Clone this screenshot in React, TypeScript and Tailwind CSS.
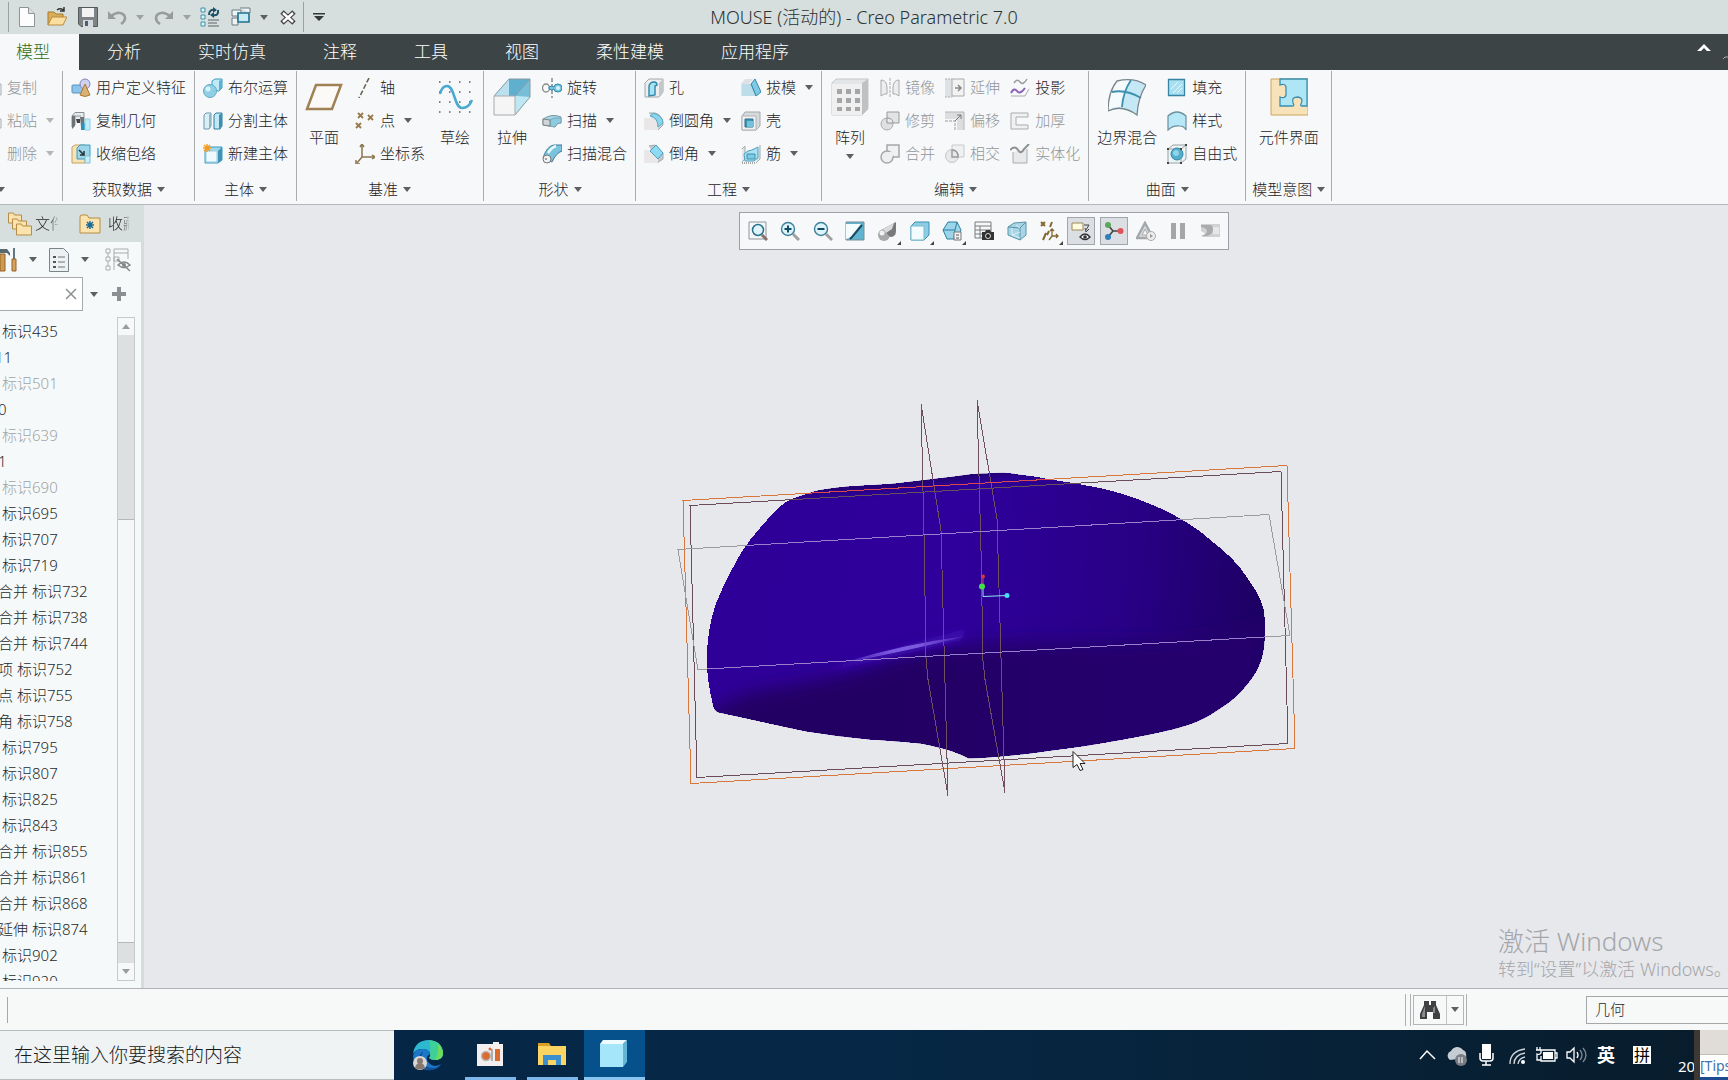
import { ReactNode } from "react";

const B = "#3d9cc4";
const L = "#bfe9f7";
const G = "#a9abad";
const T = "#96794a";

const iconArt: Record<string, ReactNode> = {
  udf: (
    <>
      <rect x="1" y="7" width="11" height="8" rx="1" fill="#8cc4ea" stroke="#5591c4" />
      <circle cx="14" cy="6" r="5" fill="#cfd2ee" stroke="#8487bb" />
      <path d="M14 6 19 17q-5 3-10 0Z" fill="#dcb274" stroke="#aa7a3c" />
    </>
  ),
  copyGeom: (
    <>
      <path d="M1 5 4 1.500H13V12M1 5V16L4 13M4 5v9M1 5H10" fill="#e8ebed" stroke="#8a9297" />
      <path d="M1 5h3v10l-3 3ZM9 6h4v10h-3Z" fill="#6d7478" />
      <path d="M5 8h4v4H6Z" fill="#444" />
      <path d="M10 12h4v7h-4Z" fill="#2e90b8" />
      <path d="M14 8h5v11h-5Z" fill="#bfeefa" stroke="#8fd0e4" />
    </>
  ),
  shrink: (
    <>
      <path d="M1 3 4 1h10v18H1Z" fill="#f7e3b6" stroke="#c3a264" />
      <path d="M6 4 9 1h10v11l-3 3H6Z" fill="#9dd6ea" stroke={B} />
      <path d="m8 6 5 5m0-4v4H9" stroke="#25333a" strokeWidth="1.500" />
      <path d="M14 12h5v7h-5Z" fill="#c9f1fb" stroke="#80bdd2" />
    </>
  ),
  boolean: (
    <>
      <path d="m9 3 3-2h7v9l-3 3H9Z" fill={L} stroke={B} />
      <path d="m16 13 3-3V1l-3 2Z" fill="#5fb0cc" />
      <circle cx="7" cy="13" r="6.500" fill="#8fd0e6" stroke="#62a9c2" />
      <circle cx="5" cy="11" r="2.500" fill="#d8f3fb" />
    </>
  ),
  split: (
    <>
      <path d="m1 4 2-2h5v13l-2 3H1Z" fill="#d9eef5" stroke="#6d99ab" />
      <path d="m6 18 2-3V2L6 4Z" fill="#8fb6c5" />
      <path d="m11 4 2-2h6v13l-2 3h-6Z" fill={L} stroke="#2d7d9e" />
      <path d="m16 18 3-3V2l-3 2Z" fill="#3d8fb0" />
    </>
  ),
  newBody: (
    <>
      <path d="m2 6 3-3h14v13l-4 3H2Z" fill="#9ed8ec" stroke={B} />
      <path d="M3 7h11v11H3Z" fill="#eefafd" stroke="#9fcbdb" />
      <path d="M15 7 19 3v13l-4 3Z" fill="#3f93b4" />
      <path d="M4 0v8M0 4h8M1 1l6 6M7 1 1 7" stroke="#f39a1f" strokeWidth="1.400" />
    </>
  ),
  axis: <path d="M14 0 4 20" stroke="#6b604f" strokeWidth="1.600" strokeDasharray="5 2" />,
  point: (
    <path d="m3 2 5 5m0-5L3 7m10-3 5 5m0-5-5 5M1 12l5 5m0-5-5 5" stroke={T} strokeWidth="1.800" />
  ),
  csys: (
    <>
      <path d="M7 1v12h12M7 13l-5 6" stroke="#8a744f" strokeWidth="1.500" />
      <path d="m5 3 2-3 2 3m8 8 3 2-3 2M1 16v4h4" stroke="#8a744f" strokeWidth="1.500" />
    </>
  ),
  revolve: (
    <>
      <path d="M10 0v20" stroke="#555" strokeDasharray="4 2" />
      <ellipse cx="4" cy="10" rx="3.500" ry="4" fill="#fafafa" stroke="#888" strokeWidth="1.300" />
      <path d="M7 9q3-2 5 0 0-3 4-3a4 4 0 0 1 0 8q-4 0-4-3-2 2-5 0Z" fill="#78c6e2" stroke="#2f88ab" />
      <circle cx="16" cy="10" r="2" fill="#d7f4fc" />
    </>
  ),
  sweep: (
    <>
      <path d="M1 8q9-6 18-2v6q-4-1-6 4l-12-2Z" fill="#9fd4e6" stroke="#7d979f" />
      <path d="M8 9q4-3 11-2v5q-4-1-6 4l-5-1Z" fill="#8ccbe0" stroke="#7fa7b5" />
      <path d="M1 8l7 1v6l-7-1Z" fill="#d2d6d8" stroke="#7a8488" />
    </>
  ),
  sweepBlend: (
    <>
      <path d="M1 14C4 5 8 1 13 1h7v6q-6 2-10 11Z" fill="#7cc4de" stroke="#3a7b96" />
      <path d="M6 9q4-6 8-7" stroke="#e9fafe" strokeWidth="2.500" />
      <circle cx="5" cy="15" r="4" fill="#f1f2f3" stroke="#777" />
      <circle cx="4" cy="15" r="1" fill="#888" />
    </>
  ),
  hole: (
    <>
      <path d="m1 5 4-4h14v13l-4 5H1Z" fill="#eceeef" stroke="#a4a8aa" />
      <path d="m15 19 4-5V1l-4 4Z" fill="#c3c7c9" />
      <path d="M5 18V8q1-4 5-4 3 0 3 3l-2 1v9Z" fill="#a7e3f5" stroke="#2f86a8" strokeWidth="1.400" />
    </>
  ),
  round: (
    <>
      <path d="M5 2h6q8 2 8 12l-5 5" stroke="#a2a9ac" fill="#d1d6d8" />
      <path d="M0 7h6q8 0 8 12H0Z" fill="#e9e7e8" />
      <path d="M6 5q3-4 6-2 7 3 7 9l-5 4Q14 6 6 5Z" fill="#8bd5ed" stroke="#5aa9c6" />
    </>
  ),
  chamfer: (
    <>
      <path d="m5 2 6-1 8 8v6l-6 4" fill="#c5cbce" stroke="#a2a9ac" />
      <path d="M0 6h5l9 8v5H0Z" fill="#e9e7e8" />
      <path d="m6 7 6-6 7 8-5 6Z" fill="#8ddaf2" stroke="#4f9fbd" />
    </>
  ),
  draft: (
    <>
      <path d="M0 6 4 1h8l-4 5v12H0Z" fill="#dfe2e4" />
      <path d="m10 6 4-5 6 13-5 4Z" fill="#7ec9e3" stroke="#318aae" />
      <path d="M1 6h9l5 12H1Z" fill="#bcdde9" />
      <path d="m10 6 5 12" stroke="#318aae" />
    </>
  ),
  shell: (
    <>
      <path d="m1 5 3-4h15v14l-4 4H1Z" fill="#d6d9db" stroke="#a4a9ab" />
      <path d="M1 5h14v14H1Z" fill="#f0f1f1" stroke="#b0b4b6" />
      <path d="M4 8h8v8H4Z" fill="#3f96b7" stroke="#2c6f8a" />
      <path d="M6 10h6v6H6Z" fill="#77c2db" />
    </>
  ),
  rib: (
    <>
      <path d="m1 5 3-3v13l-3 3M19 1v14l-4 4" fill="#e3e6e7" stroke="#a4a9ab" />
      <path d="M3 10q4-4 8-4l6-3v11l-4 3H4Z" fill="#a9e2f3" stroke="#4f9fbd" />
      <path d="M6 10h8v5H6Z" fill="#7fcbe3" stroke="#3f8fae" />
      <path d="M1 19h13" stroke="#555" strokeDasharray="1 1" />
    </>
  ),
  mirror: (
    <>
      <path d="M1 18V2q6 0 6 8v6q-2-1-6 2Z" fill="#ededee" stroke={G} />
      <path d="M10 0v20" stroke={G} strokeDasharray="3 1" />
      <path d="M19 18V2q-6 0-6 8v6q2-1 6 2Z" fill="#ededee" stroke={G} />
    </>
  ),
  extend: (
    <>
      <path d="M0 1h9v18H0" fill="#e0e1e2" />
      <path d="M0 1h7M0 19h7" stroke={G} strokeDasharray="2 1" />
      <path d="M7 1h12v17H7Z" fill="#f2f2f3" stroke="#aaa" />
      <path d="M10 10h6m-3-3 3 3-3 3" stroke="#888" strokeWidth="1.500" />
    </>
  ),
  project: (
    <>
      <path d="M4 5q3-5 6-1t7-3" stroke="#9a9da0" strokeWidth="1.500" />
      <path d="M1 15q3-6 6-2t8-3" stroke="#8a63b5" strokeWidth="2" />
      <path d="M1 18h14l4-7" stroke="#aaa" />
    </>
  ),
  trim: (
    <>
      <path d="M7 1h12v11H7Z" fill="#e2e3e4" stroke="#999" />
      <circle cx="7" cy="13" r="6" fill="#d4d6d7" fillOpacity=".7" stroke={G} />
      <path d="M7 12V7q6 0 6 5Z" fill="#e9eaeb" stroke="#999" />
    </>
  ),
  offset: (
    <>
      <path d="M0 1h19v18h-7V8H0Z" fill="#dcdddf" />
      <path d="M0 1h19v18" stroke="#b4b6b8" />
      <path d="M0 10h10v9" stroke="#999" strokeDasharray="3 1" />
      <path d="m10 10 6-6m-4 0h4v4" stroke="#777" />
    </>
  ),
  thicken: <path d="M1 2h17v4H6v8h12v4H1Z" fill="#f1f1f2" stroke={G} />,
  merge: (
    <>
      <path d="M7 1h12v12H7Z" fill="#f1f1f2" stroke="#a5a7a9" strokeWidth="1.500" />
      <circle cx="7" cy="13" r="6" fill="#eeeff0" stroke="#a5a7a9" strokeWidth="1.500" />
      <path d="M8 8h5v5Z" fill="#eeeff0" />
    </>
  ),
  intersect: (
    <>
      <path d="M7 1h12v12H7Z" fill="#eff0f0" stroke="#c8cacb" />
      <circle cx="7" cy="12" r="6.500" fill="#e8e9ea" stroke="#c4c6c7" />
      <path d="M7 13V6q6 0 6 7Z" stroke="#999" strokeWidth="1.400" />
    </>
  ),
  solidify: (
    <>
      <path d="M3 8v11h14V5" fill="#e8e9ea" stroke={G} />
      <path d="M0 6q5-5 8 0t6-1l5-5" stroke="#8e9193" strokeWidth="2" />
    </>
  ),
  fill: (
    <>
      <path d="M1.500 1.500h16v16h-16Z" fill="#a9dff0" stroke="#3784a3" strokeWidth="1.300" />
      <path d="m4 11 7-7m-5 11 9-9m-5 9 5-5" stroke="#e7f8fd" />
    </>
  ),
  style: <path d="M1 5q9-8 18 0v14q-2-4-6-4-7-1-12 4Z" fill="#b7e8f7" stroke="#6b8e9c" strokeWidth="1.200" />,
  freestyle: (
    <>
      <path d="m1 5 5-4h13v14l-5 4H1Z M1 5h13v14M14 5l5-4" stroke="#9aa1a4" fill="#eef4f6" />
      <circle cx="10" cy="10" r="6" fill="#52aecb" stroke="#2f88a8" />
      <circle cx="9" cy="9" r="3" fill="#8fd5ea" />
      <path d="M0 4h2v2H0Zm13 0h2v2h-2ZM0 18h2v2H0Zm13 0h2v2h-2ZM18 0h2v2h-2Z" fill="#444" />
    </>
  ),
  newFile: (
    <>
      <path d="M2.500.500h9l6 6v13h-15Z" fill="#fdfdfd" stroke="#8c9497" />
      <path d="M11.500.500v6h6" fill="#dde1e2" stroke="#8c9497" />
    </>
  ),
  open: (
    <>
      <path d="M1 18V5h6l2 2h7v4" fill="#d9ac56" stroke="#a87a2e" />
      <path d="m1 18 4-8h15l-4 8Z" fill="#fbdf9e" stroke="#b68b3e" />
      <path d="M10 3q4-3 7 1m0-4v4h-4" stroke="#333" strokeWidth="1.500" />
    </>
  ),
  save: (
    <>
      <path d="M.500.500h19v19H3l-2.500-2.500Z" fill="#7e8386" stroke="#56595b" />
      <path d="M4 1h12v9H4Z" fill="#f3f3f3" />
      <path d="M5 13h10v7H5Z" fill="#d7dadc" />
      <path d="M7 14h3v5H7Z" fill="#4a5f77" />
    </>
  ),
  undo: (
    <>
      <path d="M1 4v8h8Z" fill="#969c9d" />
      <path d="M4 9q8-6 13-1 3 5-3 9" stroke="#969c9d" strokeWidth="2.500" />
    </>
  ),
  redo: (
    <>
      <path d="M19 4v8h-8Z" fill="#969c9d" />
      <path d="M16 9Q8 3 3 8q-3 5 3 9" stroke="#969c9d" strokeWidth="2.500" />
    </>
  ),
  regen: (
    <>
      <path d="M1 1h4v4H1Zm0 7h4v4H1Zm0 7h4v4H1Z" fill="#dff3f8" stroke="#3a92a8" />
      <path d="M8 13h11M8 16h9M8 19h11" stroke="#5d6365" />
      <path d="M9 8q0-6 6-5m3 0q1 6-5 5" stroke="#1d5268" strokeWidth="2" />
      <path d="m13 0 4 3-4 3m1-1-4 3 4 3" fill="#1d5268" />
    </>
  ),
  windows: (
    <>
      <path d="M1 3h9v6H1Zm0 8h6v7H1ZM9 1h10v5" fill="#eef3f3" stroke="#697d85" />
      <path d="M7 6h11v9H7Z" fill="#c8eaf4" stroke="#20718f" strokeWidth="1.600" />
    </>
  ),
  closeX: (
    <>
      <path d="m4 5 12 11M16 5 4 16" stroke="#444" strokeWidth="5" />
      <path d="m5 6 10 9m0-9-10 9" stroke="#fff" strokeWidth="2.500" />
    </>
  ),
  zoomFit: (
    <>
      <path d="M1 1h17v17H1Z" fill="#f4f6f7" stroke="#8f9699" />
      <path d="m14 14 5 5" stroke="#8a6f6a" strokeWidth="3" />
      <circle cx="10" cy="9" r="5.500" fill="#dff3fb" stroke="#28708c" strokeWidth="1.500" />
    </>
  ),
  zoomIn: (
    <>
      <path d="m13 13 6 6" stroke="#a0a0a0" strokeWidth="3" />
      <circle cx="8" cy="8" r="6.500" fill="#def4fb" stroke="#3e7f99" strokeWidth="1.400" />
      <path d="M8 4.500v7M4.500 8h7" stroke="#0f4a66" strokeWidth="2" />
    </>
  ),
  zoomOut: (
    <>
      <path d="m13 13 6 6" stroke="#a0a0a0" strokeWidth="3" />
      <circle cx="8" cy="8" r="6.500" fill="#def4fb" stroke="#3e7f99" strokeWidth="1.400" />
      <path d="M4.500 8h7" stroke="#0f4a66" strokeWidth="2" />
    </>
  ),
  repaint: (
    <>
      <path d="M1 1h18v18H1Z" fill="#5fb4d2" stroke="#7d8b91" />
      <path d="M1 3h15L7 15q-3 3-6 3Z" fill="#f4fbfd" />
      <path d="M17 4 7 16l-2 2" stroke="#1d4a5e" strokeWidth="2" />
    </>
  ),
  render: (
    <>
      <circle cx="7" cy="14" r="6" fill="#a6a8a9" />
      <path d="M6 8 19 1v9q0 6-6 6Z" fill="#77797b" />
      <path d="m6 8 11-6-2 6-6 4Z" fill="#d9dada" />
      <circle cx="5" cy="12" r="2.500" fill="#f2f2f2" />
    </>
  ),
  display: (
    <>
      <path d="m1 5 4-4h14v13l-5 5H1Z" fill="#8ccde4" stroke="#3a91b2" />
      <path d="M1 5h13v14H1Z" fill="#f2fbfe" stroke="#7fb9cd" />
    </>
  ),
  saved: (
    <>
      <path d="M1 9 6 1h9l4 8-3 9H5Z" fill="#9bd5e9" stroke="#2f7f9e" />
      <path d="M1 9h12l2-8M13 9l-1 9" stroke="#2f7f9e" />
      <path d="M12 11h7v8h-7Z" fill="#f3f3f3" stroke="#777" />
      <path d="M14 14h3m-3 3h3" stroke="#555" />
    </>
  ),
  viewMgr: (
    <>
      <path d="M1 1h16v16H1ZM1 5h16M1 9h16M1 13h8M6 5v12" fill="#f7f7f7" stroke="#777d80" />
      <path d="M8 11h3l1-2h4l1 2h3v8H8Z" fill="#333" />
      <circle cx="14" cy="15" r="2.500" fill="#222" stroke="#ddd" />
    </>
  ),
  perspective: (
    <>
      <path d="M1 6 7 2l12-1v13l-6 5-12-5Z" fill="#a7d5e6" stroke="#5a93a9" />
      <path d="M1 6l12 1 6-6M13 7v12" stroke="#5a93a9" />
      <path d="M5 7v7l8-3m-8 3 8 3M9 4l4 3" stroke="#d9f0f7" />
    </>
  ),
  datumShow: (
    <>
      <path d="m2 1 4 4m0-4L2 5m11-4-2 5M7 12l-3 7m6-9-2 4" stroke="#83672f" strokeWidth="2" />
      <path d="M13 8v7h6m-6 0-3 4m1-9 2-2 2 2m2 3 2 2-2 2" stroke="#83672f" strokeWidth="1.300" />
    </>
  ),
  annotation: (
    <>
      <path d="M1 2h11v7H1Z" fill="#fffbe0" stroke="#9a8b59" />
      <path d="M13 4h5l-3 5m-1-2 1 4 3-3" stroke="#444" />
      <path d="M9 16q5-6 10 0-5 5-10 0Z" fill="#fff" stroke="#333" strokeWidth="1.400" />
      <circle cx="14" cy="16" r="1.800" fill="#333" />
    </>
  ),
  spin: (
    <>
      <path d="m4 4 5 6-5 6m5-6h7" stroke="#444" strokeWidth="1.600" />
      <circle cx="4" cy="4" r="3" fill="#5aa85a" />
      <circle cx="4" cy="16" r="3" fill="#2f7fb8" />
      <circle cx="16.500" cy="10" r="3" fill="#e0525a" />
    </>
  ),
  simulate: (
    <>
      <path d="M9 2 17 17H1Z" stroke="#a5a8aa" strokeWidth="2.500" fill="#dcdddf" />
      <path d="m9 8 3 6H6Z" fill="#f6f8fa" stroke="#a5a8aa" />
      <circle cx="15" cy="15" r="4.500" fill="#ededee" stroke={G} />
      <path d="m14 13 3 2-3 2Z" fill="#999" />
    </>
  ),
  pause: <path d="M3 2h5v16H3Zm9 0h5v16h-5Z" fill="#a4a6a8" />,
  exit: (
    <>
      <path d="M0 3h19v13H0l5-3-5-3Z" fill="#d1d2d4" />
      <path d="M0 4h9q3 0 3 5t-7 6H0q6-2 6-5T0 6Z" fill="#a9abad" />
      <path d="M12 6h6v7h-6Z" fill="#e6e7e8" />
    </>
  ),
};

const Icon = ({ name, className = "h-5 w-5" }: { name: string; className?: string }) => (
  <svg viewBox="0 0 20 20" fill="none" className={`shrink-0 ${className}`} aria-hidden="true">
    {iconArt[name]}
  </svg>
);

const Caret = ({ className = "text-[#5b6063]" }: { className?: string }) => (
  <svg viewBox="0 0 8 5" className={`h-[5px] w-2 shrink-0 ${className}`} aria-hidden="true">
    <path d="M0 0h8L4 5Z" fill="currentColor" />
  </svg>
);

type Tool = { label: string; icon?: string; caret?: boolean; disabled?: boolean };

const ToolColumn = ({ tools }: { tools: Tool[] }) => (
  <div className="flex flex-col">
    {tools.map((tool) => (
      <button
        key={tool.label}
        type="button"
        disabled={tool.disabled}
        className="flex h-[33px] items-center whitespace-nowrap disabled:text-[#939698]"
      >
        {tool.icon && <Icon name={tool.icon} />}
        <span className="ml-[5px]">{tool.label}</span>
        {tool.caret && (
          <span className="ml-[9px]">
            <Caret className={tool.disabled ? "text-[#b4b7b9]" : "text-[#5b6063]"} />
          </span>
        )}
      </button>
    ))}
  </div>
);

const BigTool = ({ label, caret, children }: { label: string; caret?: boolean; children: ReactNode }) => (
  <button type="button" className="flex flex-col items-center justify-start whitespace-nowrap pt-[7px]">
    <svg viewBox="0 0 38 38" fill="none" className="h-[38px] w-[38px]" aria-hidden="true">
      {children}
    </svg>
    <span className="mt-2.5 leading-[22px]">{label}</span>
    {caret && (
      <span className="mt-[6px] flex">
        <Caret />
      </span>
    )}
  </button>
);

const Group = ({ label, className, children }: { label?: string; className: string; children: ReactNode }) => (
  <section className="flex shrink-0 items-stretch pb-[3px] pt-px">
    <div className={`flex flex-col border-r border-[#a9adb0] ${className}`}>
      <div className="flex flex-1">{children}</div>
      <button
        type="button"
        className={`flex h-[29px] items-center gap-[5px] whitespace-nowrap pt-[6px] ${label ? "justify-center" : "-ml-[3px]"}`}
      >
        {label}
        <Caret />
      </button>
    </div>
  </section>
);

const Ribbon = () => (
  <div className="flex h-[135px] shrink-0 overflow-hidden border-b border-[#b3b8bb] bg-[#f6f8fa]">
    <Group className="w-[63px]">
      <svg viewBox="0 0 2 101" className="h-[101px] w-0.5" fill="none" aria-hidden="true">
        <path d="M0 13h1v11H0M0 48h1v9H0" stroke="#a9acae" />
      </svg>
      <ToolColumn
        tools={[
          { label: "复制", disabled: true },
          { label: "粘贴", caret: true, disabled: true },
          { label: "删除", caret: true, disabled: true },
        ]}
      />
    </Group>
    <Group label="获取数据" className="px-2">
      <ToolColumn
        tools={[
          { label: "用户定义特征", icon: "udf" },
          { label: "复制几何", icon: "copyGeom" },
          { label: "收缩包络", icon: "shrink" },
        ]}
      />
    </Group>
    <Group label="主体" className="px-2">
      <ToolColumn
        tools={[
          { label: "布尔运算", icon: "boolean" },
          { label: "分割主体", icon: "split" },
          { label: "新建主体", icon: "newBody" },
        ]}
      />
    </Group>
    <Group label="基准" className="pl-2 pr-[9px]">
      <BigTool label="平面">
        <path d="M11 7h25l-9 24H2Z" stroke="#a08153" strokeWidth="2.500" fill="#fbfaf7" />
      </BigTool>
      <div className="ml-3 mr-[11px]">
        <ToolColumn
          tools={[
            { label: "轴", icon: "axis" },
            { label: "点", icon: "point", caret: true },
            { label: "坐标系", icon: "csys" },
          ]}
        />
      </div>
      <BigTool label="草绘">
        <path d="M3 4h34M3 14h34M3 24h34M3 34h34" stroke="#555b5e" strokeWidth="1.500" strokeDasharray="1.500 8.500" />
        <path d="M4 16q2-8 7-8c8 0 7 22 15 22q7 0 10-8" stroke="#4aa9cf" strokeWidth="2.500" />
      </BigTool>
    </Group>
    <Group label="形状" className="pl-[9px] pr-2">
      <BigTool label="拉伸">
        <path d="M1 18 16 1h21v18L22 37Z" fill="#8fcfe6" />
        <path d="M1 18 16 1v17Z" fill="#b9e1ef" />
        <path d="M16 1h21L22 18h-6Z" fill="#5fafce" />
        <path d="M22 18 37 1v18Z" fill="#77bfd8" />
        <path d="M22 18 37 19 22 37Z" fill="#bfe8f5" />
        <path d="M1 18 16 1h21v18L22 37M22 18 37 1" stroke="#8a9aa1" />
        <path d="M1 18h21v19H1Z" fill="#f5f5f5" stroke="#aaa" />
      </BigTool>
      <div className="ml-[11px]">
        <ToolColumn
          tools={[
            { label: "旋转", icon: "revolve" },
            { label: "扫描", icon: "sweep", caret: true },
            { label: "扫描混合", icon: "sweepBlend" },
          ]}
        />
      </div>
    </Group>
    <Group label="工程" className="px-2">
      <div className="flex gap-2.5">
        <ToolColumn
          tools={[
            { label: "孔", icon: "hole" },
            { label: "倒圆角", icon: "round", caret: true },
            { label: "倒角", icon: "chamfer", caret: true },
          ]}
        />
        <ToolColumn
          tools={[
            { label: "拔模", icon: "draft", caret: true },
            { label: "壳", icon: "shell" },
            { label: "筋", icon: "rib", caret: true },
          ]}
        />
      </div>
    </Group>
    <Group label="编辑" className="pl-[9px] pr-2">
      <BigTool label="阵列" caret>
        <path d="m1 5 4-4h32v30l-6 6H1Z" fill="#e4e5e6" stroke="#c5c7c8" />
        <path d="m31 37 6-6V1l-6 4Z" fill="#bfc1c2" />
        <path d="M1 6h30v31H1Z" fill="#f0f0f1" />
        <path
          d="M6 11h5v5H6Zm9 0h5v5h-5Zm9 0h5v5h-5ZM6 20h5v5H6Zm9 0h5v5h-5Zm9 0h5v5h-5ZM6 29h5v4H6Zm9 0h5v4h-5Zm9 0h5v4h-5Z"
          fill="#a3a5a7"
        />
      </BigTool>
      <div className="ml-[11px] flex gap-2.5">
        <ToolColumn
          tools={[
            { label: "镜像", icon: "mirror", disabled: true },
            { label: "修剪", icon: "trim", disabled: true },
            { label: "合并", icon: "merge", disabled: true },
          ]}
        />
        <ToolColumn
          tools={[
            { label: "延伸", icon: "extend", disabled: true },
            { label: "偏移", icon: "offset", disabled: true },
            { label: "相交", icon: "intersect", disabled: true },
          ]}
        />
        <ToolColumn
          tools={[
            { label: "投影", icon: "project" },
            { label: "加厚", icon: "thicken", disabled: true },
            { label: "实体化", icon: "solidify", disabled: true },
          ]}
        />
      </div>
    </Group>
    <Group label="曲面" className="px-2">
      <BigTool label="边界混合">
        <path d="M9 3q17-4 29 4-8 12-9 30Q14 26 0 33 0 14 9 3Z" fill="#c4e8f5" />
        <path d="M9 3q7-2 14-1-8 12-9 27-7-1-14 4Q0 16 9 3Z" fill="#f5fbfd" />
        <path d="M14 29q1-15 9-27M4 14q14-3 29 6" stroke="#3d8fae" strokeWidth="1.800" />
        <path d="M9 3q17-4 29 4-8 12-9 30Q14 26 0 33 0 14 9 3Z" stroke="#7b868b" strokeWidth="1.300" />
      </BigTool>
      <div className="ml-2.5">
        <ToolColumn
          tools={[
            { label: "填充", icon: "fill" },
            { label: "样式", icon: "style" },
            { label: "自由式", icon: "freestyle" },
          ]}
        />
      </div>
    </Group>
    <Group label="模型意图" className="px-[6px]">
      <div className="flex flex-1 justify-center">
        <BigTool label="元件界面">
          <path d="M1 1h37v36H1Z" fill="#f8e2b9" stroke="#cda55a" />
          <path
            d="M10 1h27v27h-5q-2 0-1-2 3-6-3-7-7 0-5 6 2 3-1 3H10v-9q5 2 6-2V9q-1-4-6-2Z"
            fill="#aee6f5"
            stroke="#3a8fae"
            strokeWidth="1.300"
          />
        </BigTool>
      </div>
    </Group>
  </div>
);

const TitleBar = () => (
  <header className="flex h-[34px] shrink-0 items-center bg-[#d7dfde]">
    <div className="flex flex-1 items-center pl-2">
      <span className="h-[30px] w-px bg-[#9aa2a2]" />
      <button type="button" aria-label="新建" className="ml-2"><Icon name="newFile" /></button>
      <button type="button" aria-label="打开" className="ml-[10px]"><Icon name="open" /></button>
      <button type="button" aria-label="保存" className="ml-[11px]"><Icon name="save" /></button>
      <button type="button" aria-label="撤消" className="ml-[9px] flex items-center gap-[9px]">
        <Icon name="undo" />
        <Caret className="text-[#9da3a4]" />
      </button>
      <button type="button" aria-label="重做" className="ml-[10px] flex items-center gap-[9px]">
        <Icon name="redo" />
        <Caret className="text-[#9da3a4]" />
      </button>
      <button type="button" aria-label="重新生成" className="ml-[9px]"><Icon name="regen" /></button>
      <button type="button" aria-label="窗口" className="ml-[11px] flex items-center gap-[9px]">
        <Icon name="windows" />
        <Caret />
      </button>
      <button type="button" aria-label="关闭" className="ml-[10px]"><Icon name="closeX" /></button>
      <span className="ml-[5px] h-[30px] w-px bg-[#9aa2a2]" />
      <button type="button" aria-label="自定义" className="ml-[9px]">
        <svg viewBox="0 0 12 8" className="h-2 w-3" aria-hidden="true">
          <path d="M0 0h12v1.500H0ZM1 3h10L6 8Z" fill="#33393b" />
        </svg>
      </button>
    </div>
    <h1 className="whitespace-nowrap text-[18px] text-[#2c3234]">MOUSE (活动的) - Creo Parametric 7.0</h1>
    <div className="flex-1 pr-2" />
  </header>
);

const tabs = ["分析", "实时仿真", "注释", "工具", "视图", "柔性建模", "应用程序"];

const TabBar = () => (
  <nav className="flex h-9 shrink-0 items-center bg-[#3c4445] text-[17px] text-white">
    <button type="button" className="h-full w-[79px] bg-[#f6f8fa] pl-4 text-left text-[#2f6d12]">
      模型
    </button>
    <div className="flex flex-1 gap-[57px] pl-7">
      {tabs.map((tab) => (
        <button key={tab} type="button">{tab}</button>
      ))}
    </div>
    <button type="button" aria-label="最小化功能区">
      <svg viewBox="0 0 32 20" className="h-5 w-8" fill="none" aria-hidden="true">
        <path d="M1 9 8 2l7 7h-4L8 6 5 9Z" fill="#fff" />
        <path d="m27 17 2-2h3" stroke="#aaa" />
      </svg>
    </button>
  </nav>
);

const treeItems = [
  { text: "标识435" },
  { text: "11" },
  { text: "标识501", dim: true },
  { text: "0" },
  { text: "标识639", dim: true },
  { text: "1" },
  { text: "标识690", dim: true },
  { text: "标识695" },
  { text: "标识707" },
  { text: "标识719" },
  { text: "合并 标识732" },
  { text: "合并 标识738" },
  { text: "合并 标识744" },
  { text: "项 标识752" },
  { text: "点 标识755" },
  { text: "角 标识758" },
  { text: "标识795" },
  { text: "标识807" },
  { text: "标识825" },
  { text: "标识843" },
  { text: "合并 标识855" },
  { text: "合并 标识861" },
  { text: "合并 标识868" },
  { text: "延伸 标识874" },
  { text: "标识902" },
  { text: "标识920" },
];

const itemIndent = (text: string) => {
  if (text.startsWith("标识")) return "pl-0.5";
  return text === "11" ? "-ml-[5px]" : "-ml-0.5";
};

const ModelTree = () => (
  <aside className="flex w-[144px] shrink-0 flex-col border-r-[3px] border-[#d5dcdb] bg-[#f6f9fa]">
    <div className="-mr-[3px] flex h-[37px] shrink-0 items-center bg-[#d7dfde] pl-2">
      <button type="button" className="flex w-[53px] items-center gap-[3px]">
        <svg viewBox="0 0 24 24" className="h-6 w-6 shrink-0" aria-hidden="true">
          <g fill="#fbe3ad" stroke="#b68b45">
            <path d="M.500 3V1h5l1 2h7v8H.500Z" />
            <path d="M4.500 9V7h5l1 2h8v8h-14Z" />
            <path d="M8.500 15v-3h5l1 2h9v9h-15Z" />
          </g>
        </svg>
        <span className="w-6 overflow-hidden whitespace-nowrap bg-gradient-to-r from-[#1e2224] from-60% to-[#d7dfde] bg-clip-text text-transparent">
          文件
        </span>
      </button>
      <button type="button" className="ml-[18px] flex items-center gap-[7px]">
        <svg viewBox="0 0 22 20" className="h-5 w-[22px] shrink-0" fill="none" aria-hidden="true">
          <path d="M1 19V3q0-2 2-2h5l2 3h11v15Z" fill="#fbe3ad" stroke="#b68b45" />
          <path d="M11 7v8m-4-4h8m-7-3 6 6m0-6-6 6" stroke="#1f6b94" strokeWidth="1.500" />
        </svg>
        <span className="w-[22px] overflow-hidden whitespace-nowrap bg-gradient-to-r from-[#1e2224] from-60% to-[#d7dfde] bg-clip-text text-transparent">
          收藏
        </span>
      </button>
    </div>
    <div className="flex h-[35px] shrink-0 items-center">
      <button type="button" aria-label="设置" className="flex items-center gap-3">
        <svg viewBox="0 0 17 24" className="h-6 w-[17px]" aria-hidden="true">
          <path d="M0 1h7l3 4v3L7 5H0Z" fill="#596970" />
          <path d="M0 6h5v17H0Z" fill="#cf9a50" stroke="#926327" />
          <path d="M13 0h2v11h-2Z" fill="#627886" />
          <path d="M12 11h4v12h-4Z" fill="#d6a35c" stroke="#926327" />
        </svg>
        <Caret />
      </button>
      <button type="button" aria-label="显示" className="ml-3 flex items-center gap-3">
        <svg viewBox="0 0 20 24" className="h-6 w-5" fill="none" aria-hidden="true">
          <path d="M.500.500h14l5 5v18H.500Z" fill="#edf1f3" stroke="#798388" />
          <path d="M4 9h3m-3 5h3m-3 5h3" stroke="#555" strokeWidth="2" />
          <path d="M9 9h7m-7 5h7m-7 5h7" stroke="#6a7276" />
        </svg>
        <Caret />
      </button>
      <button type="button" aria-label="隐藏" className="ml-4">
        <svg viewBox="0 0 26 24" className="h-6 w-[26px]" fill="none" aria-hidden="true">
          <path d="M1 1h4v4H1Zm0 8h4v4H1Zm0 9h4v4H1ZM3 5v4m0 4v5M9 1h14v4H9Zm0 8h5v4H9ZM9 5v17M23 5v6" stroke="#a9adaf" />
          <path d="M13 17q6-6 12 0-6 5-12 0ZM12 11 25 23" stroke="#85898b" strokeWidth="1.500" />
          <circle cx="19" cy="17" r="2" fill="#85898b" />
        </svg>
      </button>
    </div>
    <div className="flex h-[34px] shrink-0 items-center">
      <div className="flex h-full w-[83px] items-center border border-l-0 border-[#a5aaad] bg-white pr-[5px]">
        <input type="text" aria-label="搜索模型树" className="min-w-0 flex-1 outline-none" />
        <button type="button" aria-label="清除">
          <svg viewBox="0 0 12 12" className="h-3 w-3" aria-hidden="true">
            <path d="m1 1 10 10M11 1 1 11" stroke="#8c9092" strokeWidth="1.500" />
          </svg>
        </button>
      </div>
      <button type="button" aria-label="筛选" className="ml-[7px] flex"><Caret /></button>
      <button type="button" aria-label="添加" className="ml-3.5">
        <svg viewBox="0 0 14 14" className="h-3.5 w-3.5" aria-hidden="true">
          <path d="M7 0v14M0 7h14" stroke="#8b8f91" strokeWidth="4" />
        </svg>
      </button>
    </div>
    <div className="mb-[7px] mt-[6px] flex min-h-0 flex-1">
      <ul className="min-w-0 flex-1 overflow-hidden pt-px">
        {treeItems.map((item) => (
          <li
            key={item.text}
            className={`h-[26px] whitespace-nowrap leading-[26px] ${itemIndent(item.text)} ${item.dim ? "text-[#a0a4a6]" : "text-[#25292b]"}`}
          >
            {item.text}
          </li>
        ))}
      </ul>
      <div className="mr-[6px] flex w-[18px] flex-col border border-[#c6cacc] bg-[#dddfe1]">
        <button type="button" aria-label="向上滚动" className="flex h-[17px] items-center justify-center bg-[#f6f8f9]">
          <span className="rotate-180"><Caret className="text-[#999d9f]" /></span>
        </button>
        <div className="h-[184px]" />
        <div className="flex-1 border-y border-[#b5b9bb] bg-[#f5f7f9]" />
        <div className="h-5" />
        <button type="button" aria-label="向下滚动" className="flex h-[17px] items-center justify-center bg-[#f6f8f9]">
          <Caret className="text-[#999d9f]" />
        </button>
      </div>
    </div>
  </aside>
);

const viewTools = [
  { name: "zoomFit", label: "重新调整" },
  { name: "zoomIn", label: "放大" },
  { name: "zoomOut", label: "缩小" },
  { name: "repaint", label: "重画" },
  { name: "render", label: "渲染选项", menu: true },
  { name: "display", label: "显示样式", menu: true },
  { name: "saved", label: "已保存方向", menu: true },
  { name: "viewMgr", label: "视图管理器" },
  { name: "perspective", label: "透视图" },
  { name: "datumShow", label: "基准显示", menu: true },
  { name: "annotation", label: "注释显示", on: true },
  { name: "spin", label: "旋转中心", on: true },
  { name: "simulate", label: "仿真" },
  { name: "pause", label: "暂停" },
  { name: "exit", label: "退出" },
];

const bodyPath =
  "M719 712C714 711 713 706 712 700C709 687 707 677 707 658C707 638 710 620 716 603C721 590 727 578 733 567C740 553 748 541 758 530C767 519 776 509 785 502C792 498 798 496 805 494C813 491 821 489 831 488C850 485 873 485 896 483C916 481 935 478 955 476C967 474 977 473 988 473C998 472 1008 472 1018 474C1030 475 1040 477 1051 479C1068 482 1085 484 1102 488C1124 493 1146 501 1165 510C1183 519 1198 528 1211 540C1227 552 1240 565 1249 580C1259 593 1265 606 1265 621C1265 634 1265 646 1262 657C1259 667 1254 676 1247 684C1240 693 1230 702 1220 708C1210 715 1199 721 1186 725C1167 731 1144 735 1123 739C1100 743 1077 747 1051 750C1024 754 996 757 969 758C963 755 957 752 950 750C941 747 931 745 921 743C904 741 887 740 870 739C848 737 828 734 807 731C777 725 748 718 719 712Z";

const outerPlane = "M683 500 1287 465 1295 748 691 783Z";
const topPlane = "M678 549 1269 514 1290 635 698 669Z";

const ModelCanvas = () => (
  <svg viewBox="144 205 1584 782" className="absolute inset-0 h-full w-full" fill="none" aria-label="MOUSE">
    <defs>
      <linearGradient id="shade" x1="707" y1="560" x2="1265" y2="620" gradientUnits="userSpaceOnUse">
        <stop offset="0" stopColor="#2f0098" />
        <stop offset=".45" stopColor="#2f009b" />
        <stop offset=".75" stopColor="#280086" />
        <stop offset="1" stopColor="#1d0062" />
      </linearGradient>
      <linearGradient id="under" x1="900" y1="0" x2="1265" y2="0" gradientUnits="userSpaceOnUse">
        <stop offset="0" stopColor="#200063" />
        <stop offset="1" stopColor="#23006e" stopOpacity=".85" />
      </linearGradient>
      <filter id="soft" x="-20%" y="-50%" width="140%" height="200%">
        <feGaussianBlur stdDeviation="9" />
      </filter>
      <filter id="glow" x="-20%" y="-50%" width="140%" height="200%">
        <feGaussianBlur stdDeviation="3" />
      </filter>
      <linearGradient id="streak" x1="845" y1="0" x2="965" y2="0" gradientUnits="userSpaceOnUse">
        <stop offset="0" stopColor="#7a58e0" stopOpacity="0" />
        <stop offset=".4" stopColor="#7d5be0" />
        <stop offset=".6" stopColor="#7d5be0" />
        <stop offset="1" stopColor="#7a58e0" stopOpacity="0" />
      </linearGradient>
      <clipPath id="bodyClip">
        <path d={bodyPath} />
      </clipPath>
    </defs>
    <path d={bodyPath} fill="url(#shade)" shapeRendering="crispEdges" />
    <g clipPath="url(#bodyClip)">
      <path d="M780 495Q900 490 985 477T1100 488L1060 466H820Z" fill="#23006f" filter="url(#glow)" />
      <path
        d="M700 722Q728 694 770 688T860 670Q910 650 960 645T1110 642T1270 620L1240 800H680Z"
        fill="url(#under)"
        filter="url(#soft)"
      />
      <path d="M830 667Q890 648 968 628L960 640Q900 655 840 668Z" fill="#3d0fae" filter="url(#glow)" />
      <path d="M845 662Q905 644 965 636Q905 650 845 662Z" fill="url(#streak)" stroke="url(#streak)" />
    </g>
    <g shapeRendering="crispEdges">
      <path d={outerPlane} stroke="#d9773a" />
      <path d="M690 505 1281 471 1288 743 697 777Z" stroke="#6b4d59" />
      <path d={topPlane} stroke="#9a9a9f" />
      <path d="M921 403 924 533 926 657 928 679 948 795 943 607 941 530 921 403Z" stroke="#704f60" />
      <path d="M977 400 981 550 983 660 985 679 1005 792 1001 657 997 518 977 400Z" stroke="#704f60" />
    </g>
    <g clipPath="url(#bodyClip)" shapeRendering="crispEdges">
      <path d={topPlane} stroke="#9a80cc" />
      <path d={outerPlane} stroke="#dc4a50" />
    </g>
    <path d="M983 576v9" stroke="#e0484d" />
    <path d="M983 586v10l24-1" stroke="#8fe6f0" />
    <circle cx="983" cy="576" r="2" fill="#cf3a4a" />
    <circle cx="982" cy="586" r="3" fill="#43e04b" />
    <circle cx="1007" cy="595" r="2.500" fill="#4cdcf5" />
    <path d="M1073 751v16l4-3 3 6 3-1-3-6h5Z" fill="#fff" stroke="#222" />
  </svg>
);

const Stage = () => (
  <main className="relative min-w-0 flex-1 overflow-hidden bg-[#e7e8ec]">
    <ModelCanvas />
    <div className="absolute left-[595px] top-[7px] flex h-[38px] w-[490px] items-center justify-between border border-[#9da1a5] bg-[#f6f8fa] pl-1 pr-[3px]">
      {viewTools.map((tool) => (
        <button
          key={tool.name}
          type="button"
          aria-label={tool.label}
          aria-pressed={tool.on}
          className="relative flex h-7 w-7 items-center justify-center aria-pressed:border aria-pressed:border-[#a2a6ab] aria-pressed:bg-[#dbdee2]"
        >
          <Icon name={tool.name} />
          {tool.menu && (
            <svg viewBox="0 0 4 4" className="absolute bottom-0 right-0 h-1 w-1" aria-hidden="true">
              <path d="M4 0v4H0Z" fill="#444" />
            </svg>
          )}
        </button>
      ))}
    </div>
    <div className="absolute bottom-[6px] right-0 w-[230px] whitespace-nowrap text-[#a4a6aa]">
      <p className="text-[26px] leading-[30px]">激活 Windows</p>
      <p className="text-lg leading-[26px]">转到“设置”以激活 Windows。</p>
    </div>
  </main>
);

const StatusBar = () => (
  <footer className="flex h-[42px] shrink-0 items-center border-t border-[#b0b4b8] bg-[#f7f9f9] pl-[7px]">
    <span className="h-[26px] w-px bg-[#a4a8aa]" />
    <div className="ml-auto flex items-center">
      <span className="h-8 w-1.5 border-x border-[#adb1b3]" />
      <div className="ml-0.5 flex h-[30px] border border-[#b4b7b9]">
        <button type="button" aria-label="查找" className="flex w-[33px] items-center justify-center border-r border-[#c2c5c7]">
          <svg viewBox="0 0 20 20" className="h-5 w-5" aria-hidden="true">
            <path d="M4 1h5v4h2V1h5v4l4 9v5h-7v-7H7v7H0v-5l4-9Z" fill="#3f4142" />
            <path d="M5 6 2 14v3h3V8Zm10 0-2 2v5h2Z" fill="#8a8d8f" />
          </svg>
        </button>
        <button type="button" aria-label="查找选项" className="flex w-4 items-center justify-center">
          <Caret />
        </button>
      </div>
      <span className="ml-0.5 h-8 w-px bg-[#adb1b3]" />
    </div>
    <select
      aria-label="选择过滤器"
      defaultValue="几何"
      className="ml-[119px] h-7 w-[142px] appearance-none border border-r-0 border-[#a4a8aa] bg-[#f7f9f9] pl-2 text-[#25292b]"
    >
      <option>几何</option>
    </select>
  </footer>
);

const Taskbar = () => (
  <div className="flex h-[50px] shrink-0 bg-gradient-to-r from-[#062445] via-[#062846] to-[#081c2b]">
    <input
      type="text"
      aria-label="搜索"
      placeholder="在这里输入你要搜索的内容"
      className="w-[394px] border-y border-[#b9bec1] bg-[#eff3f4] pl-3.5 text-[19px] outline-none placeholder:text-[#16191a] placeholder:opacity-100"
    />
    <button type="button" aria-label="Edge" className="flex w-[68px] items-center justify-center">
      <svg viewBox="0 0 32 32" className="h-8 w-8" aria-hidden="true">
        <path d="M1 15Q3 1 17 1q13 1 14 13 0 7-8 7-4 0-6-2 2-2 1-5-2-4-8-4-6 0-9 5Z" fill="#2cb9cf" />
        <path d="M17 1q13 1 14 13 0 7-8 7-4 0-6-2 2-2 1-5 1-9-1-13Z" fill="#3fcf98" />
        <path d="M26 5q5 4 5 9 0 7-8 7 4-7 3-16Z" fill="#6bdc60" />
        <path d="M1 17Q3 9 11 10q7 0 7 5-4 2-3 6 2 5 8 6 3 0 6-2-5 7-14 6Q2 29 1 17Z" fill="#1b78c8" />
        <path d="M11 13q-3 6 0 11t11 5q4 0 7-3-5 6-13 5Q6 29 7 19q1-5 4-6Z" fill="#134f98" />
        <circle cx="8" cy="24" r="7" fill="#d9d6d3" />
        <circle cx="8" cy="22" r="3" fill="#85786f" />
        <path d="M3 29q1-5 5-5t5 5q-5 3-10 0Z" fill="#85786f" />
      </svg>
    </button>
    <button type="button" aria-label="录屏" className="mx-[3px] flex w-[51px] items-center justify-center border-b-[3px] border-[#7db8ea] pr-0.5">
      <svg viewBox="0 0 26 24" className="h-6 w-[26px]" fill="none" aria-hidden="true">
        <path d="M0 2h16V0h6v2h4v22H0Z" fill="#f2efee" />
        <circle cx="9" cy="14" r="4.500" fill="#dc6b2f" stroke="#b9baba" strokeWidth="1.500" />
        <path d="M15 7v12" stroke="#999" strokeWidth="1.500" />
        <path d="M18 7h5v12h-5Z" fill="#dc6b2f" />
        <circle cx="13" cy="7" r="1.500" fill="#dc6b2f" />
      </svg>
    </button>
    <button type="button" aria-label="文件资源管理器" className="mx-2 flex w-[51px] items-center justify-center border-b-[3px] border-[#7db8ea] pr-0.5">
      <svg viewBox="0 0 28 24" className="h-6 w-7" aria-hidden="true">
        <path d="M0 1h11l2 3H0Z" fill="#d99e22" />
        <path d="M0 4h28v19H0Z" fill="#fbd462" />
        <path d="M5 13h18v10h-5v-5h-8v5H5Z" fill="#3c8fce" />
      </svg>
    </button>
    <button type="button" aria-label="Creo Parametric" className="-ml-0.5 flex w-[61px] items-center justify-center border-b-[3px] border-[#8cc4f0] bg-[#06508c] pr-1">
      <svg viewBox="0 0 28 28" className="h-7 w-7" aria-hidden="true">
        <path d="m1 4 3-4h24l-4 4Z" fill="#eefcff" />
        <path d="M1 4h23v23H1Z" fill="#a6e6fb" />
        <path d="m24 4 4-4v22l-4 5Z" fill="#63b5d7" />
      </svg>
    </button>
    <div className="ml-auto flex items-center text-white">
      <svg viewBox="0 0 172 26" className="h-[26px] w-[172px]" fill="none" aria-hidden="true">
        <path d="m1 17 7-8 8 8" stroke="#fff" strokeWidth="1.500" />
        <path d="M31 18a5 5 0 0 1 1-9 7 7 0 0 1 12-1q4 1 3 8Z" fill="#c6cdd2" />
        <circle cx="42" cy="18" r="6" fill="#777d82" />
        <path d="M40 15v6m3-6v6" stroke="#fff" />
        <path d="M63 2h9v15h-9Z" fill="#fff" />
        <path d="M61 11v5q0 3 3 3h7q3 0 3-3v-5M67 19v4m-4 0h9" stroke="#fff" strokeWidth="1.500" />
        <path d="M91 22Q91 9 106 7M95 22q0-9 11-11M99 22q1-6 7-7" stroke="#cfd6db" strokeWidth="1.300" />
        <circle cx="104" cy="20" r="2" fill="#fff" />
        <path d="M122 8h14v11h-14v-5M136 11h2v5h-2M118 5v3m3-3v3m-4 0h5v3q-1 2-4 1v6h4" stroke="#fff" strokeWidth="1.300" />
        <path d="M124 10h10v7h-10Z" fill="#fff" />
        <path d="M148 10h3l4-4v14l-4-4h-3ZM158 10q2 3 0 6" stroke="#fff" strokeWidth="1.300" />
        <path d="M161 8q4 5 0 10M164 6q6 7 0 14" stroke="#7d8991" strokeWidth="1.300" />
      </svg>
      <span className="ml-[6px] text-lg font-bold">英</span>
      <span className="ml-[18px] flex h-[18px] w-[18px] items-center justify-center bg-white text-base font-normal text-black">拼</span>
      <span className="ml-[27px] w-4 pt-[22px] text-[15px] font-normal leading-5">20</span>
    </div>
    <div className="flex w-[34px] flex-col overflow-hidden border-l-[6px] border-[#3d3836] bg-white">
      <div className="h-[25px] border-b border-[#c2bcb6] bg-[#e0dcd7]" />
      <p className="flex-1 whitespace-nowrap text-sm font-normal leading-[22px] text-[#3d74ad]">[Tips</p>
      <div className="h-[3px] bg-[#1d4b8f]" />
    </div>
  </div>
);

const App = () => {
  return (
    <div className="flex h-screen flex-col overflow-hidden bg-[#f6f8fa] font-['Noto_Sans','Noto_Sans_CJK_SC',sans-serif] text-[15px] font-light text-[#1e2224]">
      <TitleBar />
      <TabBar />
      <Ribbon />
      <div className="flex min-h-0 flex-1">
        <ModelTree />
        <Stage />
      </div>
      <StatusBar />
      <Taskbar />
    </div>
  );
};

export default App;
